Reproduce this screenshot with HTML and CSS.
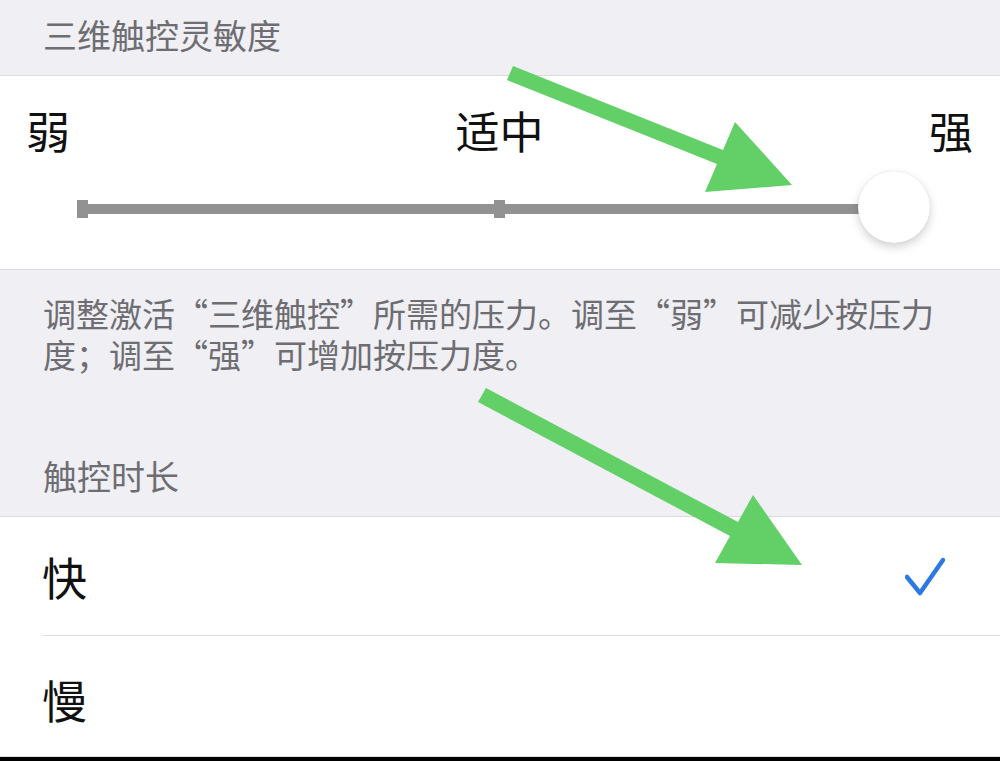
FILE: index.html
```html
<!DOCTYPE html>
<html lang="zh-CN">
<head>
    <meta charset="UTF-8">
    <meta name="viewport" content="width=device-width, initial-scale=1.0">
    <title>三维触控</title>
    <link rel="stylesheet" href="styles.css">
</head>
<body>
    <div class="page">
        <div class="group-header">三维触控灵敏度</div>
        <div class="card sensitivity">
            <div class="levels">
                <span>弱</span>
                <span>适中</span>
                <span>强</span>
            </div>
            <div class="slider">
                <div class="track"></div>
                <div class="cap"></div>
                <div class="tick"></div>
                <div class="thumb"></div>
            </div>
        </div>
        <div class="group-footer">调整激活“三维触控”所需的压力。调至“弱”可减少按压力度；调至“强”可增加按压力度。</div>
        <div class="group-header second">触控时长</div>
        <div class="card">
            <div class="row">
                <span>快</span>
                <svg class="check" width="40" height="40" viewBox="0 0 40 40">
                    <polyline points="2,21 15,37 38,4" fill="none" stroke="#2d79e4" stroke-width="4.5" stroke-linecap="round" stroke-linejoin="round"/>
                </svg>
            </div>
            <div class="row last">
                <span>慢</span>
            </div>
        </div>
        <div class="bottom-bar"></div>

        <!-- green annotation arrows drawn over the screenshot -->
        <svg class="arrows" width="1000" height="761" viewBox="0 0 1000 761">
            <polygon fill="#62cf67" points="513,66 723,150 735,122 792,185 705,192 717,164 507,80"/>
            <polygon fill="#62cf67" points="486,388 738,522 753,495 802,565 715,563 730,536 478,402"/>
        </svg>
    </div>
</body>
</html>
```

FILE: styles.css
```css
* {
    box-sizing: border-box;
}
body {
    margin: 0;
    background-color: #efeff4;
    font-family: "Noto Sans CJK SC", "Noto Sans", sans-serif;
}
.page {
    position: relative;
    width: 1000px;
    height: 761px;
    overflow: hidden;
}
.group-header {
    color: #6d6d72;
    font-size: 34px;
    line-height: 41px;
    padding: 14px 43px 20px;
}
.group-header.second {
    padding-top: 80px;
    padding-bottom: 20px;
}
.group-footer {
    color: #6d6d72;
    font-size: 33px;
    line-height: 41px;
    padding: 23px 60px 0 43px;
}
.card {
    background-color: white;
    border-top: 1px solid #dcdce0;
    border-bottom: 1px solid #dcdce0;
}
.sensitivity {
    padding: 32px 0 26px;
}
.levels {
    display: flex;
    justify-content: space-between;
    padding: 0 27px 0 26px;
    font-size: 44px;
    line-height: 44px;
    color: #111;
}
.slider {
    position: relative;
    height: 72px;
    margin-top: 19px;
}
.track {
    position: absolute;
    left: 78px;
    width: 816px;
    top: 33px;
    height: 10px;
    background-color: #929292;
}
.cap, .tick {
    position: absolute;
    top: 29px;
    width: 11px;
    height: 18px;
    background-color: #929292;
}
.cap {
    left: 77px;
}
.tick {
    left: 494px;
}
.thumb {
    position: absolute;
    left: 858px;
    top: 0;
    width: 72px;
    height: 72px;
    border-radius: 50%;
    background-color: white;
    box-shadow: 0 4px 10px rgba(0, 0, 0, 0.18), 0 0 1px rgba(0, 0, 0, 0.15);
}
.row {
    display: flex;
    justify-content: space-between;
    align-items: center;
    height: 119px;
    padding: 0 55px 0 42px;
    font-size: 45px;
    color: #111;
    position: relative;
}
.row::after {
    content: "";
    position: absolute;
    left: 43px;
    right: 0;
    bottom: 0;
    border-bottom: 1px solid #dcdce0;
}
.row.last {
    height: 120px;
    padding-top: 6px;
}
.row.last::after {
    display: none;
}
.check {
    margin-top: -1px;
}
.bottom-bar {
    position: absolute;
    left: 0;
    right: 0;
    bottom: 0;
    height: 4px;
    background-color: #000;
}
.arrows {
    position: absolute;
    left: 0;
    top: 0;
    pointer-events: none;
}
```
